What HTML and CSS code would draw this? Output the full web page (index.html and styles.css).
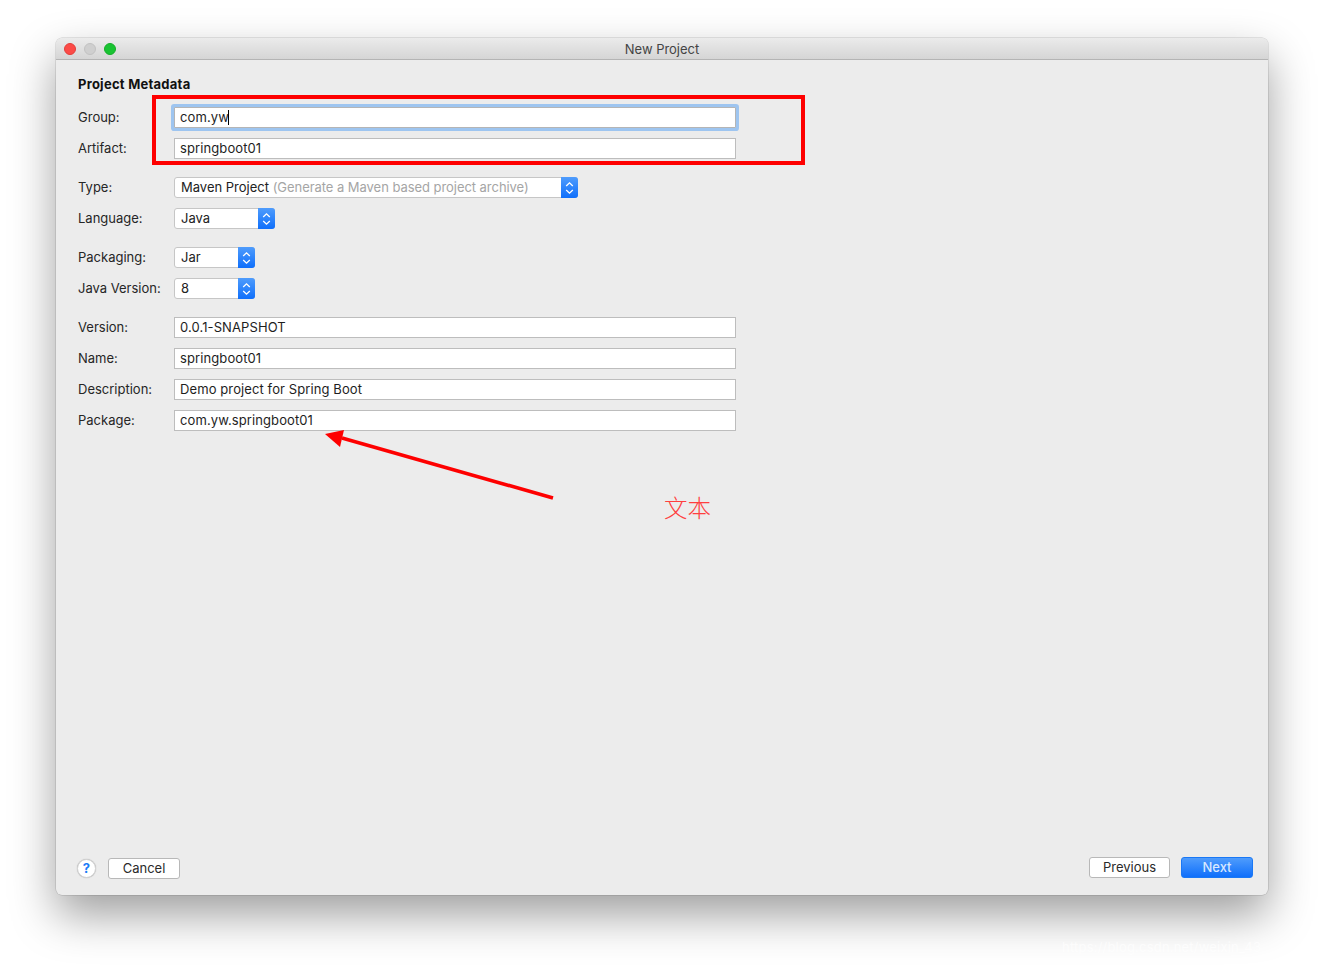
FILE: index.html
```html
<!DOCTYPE html>
<html lang="en">
<head>
<meta charset="utf-8">
<title>New Project</title>
<link rel="stylesheet" href="styles.css">
</head>
<body>
<div class="window">
  <header class="titlebar">
    <div class="lights">
      <span class="light red"></span>
      <span class="light grey"></span>
      <span class="light green"></span>
    </div>
    <div class="title">New Project</div>
  </header>
  <main class="content">
    <h1 class="heading">Project Metadata</h1>
    <div class="group">
      <div class="row"><label class="lbl">Group:</label><div class="field focused">com.yw<span class="caret"></span></div></div>
      <div class="row"><label class="lbl">Artifact:</label><div class="field">springboot01</div></div>
    </div>
    <div class="group">
      <div class="row"><label class="lbl">Type:</label>
        <div class="select w-type"><span class="val">Maven Project <em class="hint">(Generate a Maven based project archive)</em></span>
          <span class="stepper"><svg width="9" height="14" viewBox="0 0 9 14"><path d="M1.2 5 4.5 1.8 7.8 5M1.2 9 4.5 12.2 7.8 9" fill="none" stroke="#fff" stroke-width="1.3"/></svg></span></div></div>
      <div class="row"><label class="lbl">Language:</label>
        <div class="select w-lang"><span class="val">Java</span>
          <span class="stepper"><svg width="9" height="14" viewBox="0 0 9 14"><path d="M1.2 5 4.5 1.8 7.8 5M1.2 9 4.5 12.2 7.8 9" fill="none" stroke="#fff" stroke-width="1.3"/></svg></span></div></div>
    </div>
    <div class="group">
      <div class="row"><label class="lbl">Packaging:</label>
        <div class="select w-short"><span class="val">Jar</span>
          <span class="stepper"><svg width="9" height="14" viewBox="0 0 9 14"><path d="M1.2 5 4.5 1.8 7.8 5M1.2 9 4.5 12.2 7.8 9" fill="none" stroke="#fff" stroke-width="1.3"/></svg></span></div></div>
      <div class="row"><label class="lbl">Java Version:</label>
        <div class="select w-short"><span class="val">8</span>
          <span class="stepper"><svg width="9" height="14" viewBox="0 0 9 14"><path d="M1.2 5 4.5 1.8 7.8 5M1.2 9 4.5 12.2 7.8 9" fill="none" stroke="#fff" stroke-width="1.3"/></svg></span></div></div>
    </div>
    <div class="group">
      <div class="row"><label class="lbl">Version:</label><div class="field">0.0.1-SNAPSHOT</div></div>
      <div class="row"><label class="lbl">Name:</label><div class="field">springboot01</div></div>
      <div class="row"><label class="lbl">Description:</label><div class="field">Demo project for Spring Boot</div></div>
      <div class="row"><label class="lbl">Package:</label><div class="field">com.yw.springboot01</div></div>
    </div>
  </main>
  <footer class="footer">
    <div class="foot-left">
      <button class="help" type="button">?</button>
      <button class="btn cancel" type="button">Cancel</button>
    </div>
    <div class="foot-right">
      <button class="btn prev" type="button">Previous</button>
      <button class="btn next" type="button">Next</button>
    </div>
  </footer>
  <div class="redbox"></div>
  <svg class="arrow" width="240" height="75" viewBox="0 0 240 75">
    <path d="M233 70 22 10" fill="none" stroke="#fe0000" stroke-width="3.6"/>
    <path d="M5 6 24 2 20 19Z" fill="#fe0000"/>
  </svg>
  <div class="note">文本</div>
</div>
<div class="watermark">https://blog.csdn.net/weixin_43</div>
</body>
</html>
```

FILE: styles.css
```css
* { box-sizing: border-box; }
html, body { margin: 0; height: 100%; }
body {
  background: #fff;
  padding: 38px 56px 0;
  font-family: "Inter", "Liberation Sans", sans-serif;
  font-size: 13px;
  color: #1f1f1f;
  overflow: hidden;
  position: relative;
}
.window {
  position: relative;
  width: 1212px;
  height: 857px;
  background: #ececec;
  border-radius: 6px;
  box-shadow: 0 0 0 0.5px rgba(0,0,0,.18), 0 20px 45px rgba(0,0,0,.38);
  display: flex;
  flex-direction: column;
}
.titlebar {
  height: 22px;
  flex: none;
  display: flex;
  align-items: center;
  position: relative;
  justify-content: center;
  border-radius: 6px 6px 0 0;
  background: linear-gradient(#ebebeb, #d5d5d5);
  border-bottom: 1px solid #b4b4b4;
}
.lights { position: absolute; left: 8px; top: 5px; display: flex; gap: 8px; }
.light { width: 12px; height: 12px; border-radius: 50%; }
.light.red { background: #fc4b47; border: 1px solid #e33e3a; }
.light.grey { background: #cfcfcf; border: 1px solid #c2c2c2; }
.light.green { background: #19c332; border: 1px solid #14ae28; }
.title { font-size: 13px; color: #444; letter-spacing: -0.02px; }
.content { flex: 1; padding: 16px 0 0 22px; }
.heading { margin: 0 0 15px; font-size: 13px; line-height: 16px; font-weight: 700; color: #111; letter-spacing: 0.25px; }
.group { display: flex; flex-direction: column; gap: 10px; margin-bottom: 18px; }
.row { display: flex; align-items: center; height: 21px; }
.lbl { width: 96px; flex: none; color: #262626; padding-bottom: 2px; }
.field {
  width: 562px;
  height: 21px;
  background: #fff;
  border: 1px solid #bdbdbd;
  padding-left: 5px;
  line-height: 19px;
  color: #1e1e1e;
  display: flex;
  align-items: center;
  letter-spacing: 0.1px;
}
.field.focused { box-shadow: 0 0 0 3px #9ec5f0; border-color: #b5b5b5; border-radius: 1px; }
.caret { width: 1px; height: 15px; background: #000; margin-left: -1px; }
.select {
  height: 21px;
  background: #fff;
  border: 1px solid #c6c6c6;
  border-radius: 3px;
  display: flex;
  align-items: center;
  justify-content: space-between;
  padding-left: 6px;
  position: relative;
}
.w-type { width: 404px; }
.w-lang { width: 101px; }
.w-short { width: 81px; }
.val { white-space: nowrap; color: #222; padding-bottom: 2px; }
.hint { font-style: normal; color: #a5a5a5; letter-spacing: -0.05px; margin-left: 0; }
.stepper {
  width: 17px;
  height: 21px;
  margin: -1px -1px -1px 0;
  flex: none;
  border-radius: 0 3px 3px 0;
  background: linear-gradient(#4f9cfc, #0f6ffb);
  display: flex;
  align-items: center;
  justify-content: center;
}
.footer {
  flex: none;
  height: 37px;
  display: flex;
  justify-content: space-between;
  padding: 0 15px 0 21px;
  align-items: flex-start;
}
.foot-left, .foot-right { display: flex; align-items: center; }
.foot-left { gap: 12px; }
.foot-right { gap: 11px; margin-top: -1px; }
.btn {
  font: inherit;
  height: 21px;
  border-radius: 3px;
  padding: 0;
  background: #fff;
  border: 1px solid #b8b8b8;
  color: #2a2a2a;
  padding-bottom: 1px;
}
.cancel { width: 72px; }
.prev { width: 81px; }
.next {
  width: 72px;
  border: 1px solid #1a78f5;
  color: #d8e8ff;
  font-weight: 500;
  background: linear-gradient(#4f9cfc, #0f6ffb);
}
.help {
  width: 19px;
  height: 19px;
  border-radius: 50%;
  background: #fff;
  border: 1px solid #d4d4d4;
  box-shadow: 0 0 1px rgba(0,0,0,.3);
  color: #1a7bf7;
  font: 700 13px/17px "Inter", "Liberation Sans", sans-serif;
  padding: 0;
}
.redbox {
  position: absolute;
  left: 96px;
  top: 57px;
  width: 653px;
  height: 70px;
  border: 4px solid #fe0000;
}
.arrow { position: absolute; left: 264px; top: 390px; }
.note {
  position: absolute;
  left: 608px;
  top: 454px;
  font: 300 23.5px/30px "Noto Sans CJK SC", sans-serif;
  color: #ff3f3f;
}
.watermark {
  position: absolute;
  left: 1062px;
  top: 939px;
  color: #fff;
  opacity: .7;
  font-size: 13px;
  letter-spacing: 0.2px;
}
```
